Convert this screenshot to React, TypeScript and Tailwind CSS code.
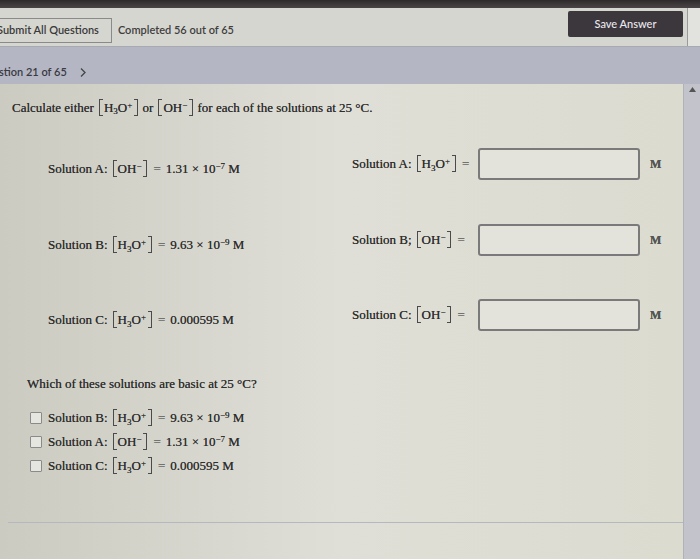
import React from "react";

const LB = () => (
  <span className="inline-block w-[4px] h-[17px] border-l-[1.5px] border-t border-b border-[#4a4a4a] align-[-4px] ml-[5px] mr-[1px]" />
);
const RB = () => (
  <span className="inline-block w-[4px] h-[17px] border-r-[1.5px] border-t border-b border-[#4a4a4a] align-[-4px] ml-[2px] mr-[1px]" />
);

const H3O = () => (
  <>
    <LB />H<sub className="text-[9px]">3</sub>O<sup className="text-[9px]">+</sup>
    <RB />
  </>
);
const OH = () => (
  <>
    <LB />OH<sup className="text-[9px]">−</sup>
    <RB />
  </>
);

const Eq = () => <span className="text-[#777] mx-[5px]">=</span>;

const Row = ({
  left,
  right,
  mt,
}: {
  left: React.ReactNode;
  right: React.ReactNode;
  mt: string;
}) => (
  <div className={`flex items-center h-[32px] ${mt}`}>
    <div className="w-[344px] pl-[40px] pt-[10px] whitespace-nowrap">{left}</div>
    <div className="w-[126px] whitespace-nowrap">{right}</div>
    <div className="w-[162px] h-[32px] border-2 border-[#7a7a7a] rounded-[3px] bg-[#e3e3db]" />
    <div className="ml-[10px] font-bold text-[12px] text-[#555]">M</div>
  </div>
);

const Check = ({ children }: { children: React.ReactNode }) => (
  <div className="flex items-center h-[24px] pl-[22px]">
    <span className="w-[12px] h-[12px] border border-[#8a8a8a] rounded-[1px] bg-[#e6e6e0] mr-[6px]" />
    <span className="whitespace-nowrap">{children}</span>
  </div>
);

export default function App() {
  return (
    <div className="w-[700px] h-[559px] overflow-hidden flex flex-col bg-[#d9d8ce]">
      <div className="h-[8px] bg-linear-to-b from-[#2e2a2c] to-[#4a4446]" />
      <div
        className="h-[39px] flex items-start bg-[#d6d6d1] border-b border-[#a8aab2]"
        style={{ fontFamily: "Lato, 'Open Sans', sans-serif" }}
      >
        <div className="ml-[-16px] mt-[10px] h-[25px] px-[12px] flex items-center border border-[#8a8a8a] text-[11px] font-semibold text-[#3a3a3a] whitespace-nowrap">
          Submit All Questions
        </div>
        <div className="ml-[6px] mt-[10px] h-[25px] flex items-center text-[11px] font-semibold text-[#3e3e3e] whitespace-nowrap">
          Completed 56 out of 65
        </div>
        <div className="flex-1" />
        <div className="mt-[3px] w-[115px] h-[26px] rounded-[2px] bg-[#3c373d] flex items-center justify-center text-[11px] text-[#ebe9ee] font-medium">
          Save Answer
        </div>
        <div className="ml-[4px] w-[13px] h-full border-l border-[#9a9a9a] bg-[#e2e2df]" />
      </div>
      <div
        className="h-[37px] bg-[#b4b7c3] flex items-center pt-[13px] text-[11px] font-semibold text-[#3a3a44]"
        style={{ fontFamily: "Lato, 'Open Sans', sans-serif" }}
      >
        <span className="ml-[-1px] whitespace-nowrap">stion 21 of 65</span>
        <svg className="ml-[12px]" width="8" height="11" viewBox="0 0 8 11">
          <path d="M2 1.5 L6 5.5 L2 9.5" fill="none" stroke="#444" strokeWidth="1.3" />
        </svg>
      </div>
      <div className="flex-1 flex">
        <div
          className="flex-1 bg-linear-to-r from-[#cbcbc2] via-[#e0dfd7] to-[#dcdbd0] text-[13px] text-[#2e2e2e] [text-shadow:0_0_0.3px_#444]"
          style={{ fontFamily: "'Liberation Serif', 'Times New Roman', serif" }}
        >
          <div className="ml-[8px] pt-[15px] pb-[44px] border-b border-[#b6b8c0]">
            <div className="pl-[4px] leading-[18px] whitespace-nowrap">
              Calculate either<H3O /> or<OH /> for each of the solutions at 25 °C.
            </div>
            <Row
              mt="mt-[31px]"
              left={
                <>
                  Solution A:<OH />
                  <Eq />1.31 × 10<sup className="text-[9px]">−7</sup> M
                </>
              }
              right={
                <>
                  Solution A:<H3O />
                  <Eq />
                </>
              }
            />
            <Row
              mt="mt-[44px]"
              left={
                <>
                  Solution B:<H3O />
                  <Eq />9.63 × 10<sup className="text-[9px]">−9</sup> M
                </>
              }
              right={
                <>
                  Solution B;<OH />
                  <Eq />
                </>
              }
            />
            <Row
              mt="mt-[43px]"
              left={
                <>
                  Solution C:<H3O />
                  <Eq />0.000595 M
                </>
              }
              right={
                <>
                  Solution C:<OH />
                  <Eq />
                </>
              }
            />
            <div className="mt-[44px] pl-[19px] leading-[18px] whitespace-nowrap">
              Which of these solutions are basic at 25 °C?
            </div>
            <div className="mt-[13px]">
              <Check>
                Solution B:<H3O />
                <Eq />9.63 × 10<sup className="text-[9px]">−9</sup> M
              </Check>
              <Check>
                Solution A:<OH />
                <Eq />1.31 × 10<sup className="text-[9px]">−7</sup> M
              </Check>
              <Check>
                Solution C:<H3O />
                <Eq />0.000595 M
              </Check>
            </div>
          </div>
        </div>
        <div className="w-[17px] bg-[#c3c4cb] border-l border-[#b0b2ba] flex justify-center pt-[3px]">
          <svg width="7" height="5" viewBox="0 0 7 5">
            <path d="M0 5 L3.5 0 L7 5 Z" fill="#555" />
          </svg>
        </div>
      </div>
    </div>
  );
}
